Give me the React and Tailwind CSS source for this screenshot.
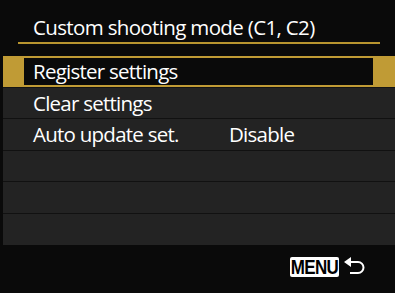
import React from 'react';

const rows = [
  { label: 'Register settings', selected: true },
  { label: 'Clear settings' },
  { label: 'Auto update set.', value: 'Disable' },
  { label: '' },
  { label: '' },
  { label: '' },
];

const BackArrow = () => (
  <svg width="22" height="20" viewBox="0 0 22 20" className="block">
    <path d="M0 5 L7 0 L7 10 Z" fill="#fff" />
    <path d="M6 5 H14 A5.5 5.5 0 0 1 14 16 H6" fill="none" stroke="#fff" strokeWidth="2" />
  </svg>
);

export default function App() {
  return (
    <div
      className="w-[395px] h-[293px] bg-[#0a0a0a] text-white flex flex-col overflow-hidden"
      style={{ fontFamily: '"Open Sans", "Noto Sans", sans-serif' }}
    >
      <div className="h-[56px] flex flex-col pl-[18px] pr-[15px]">
        <div className="pt-[14px] pl-[15px] text-[20.5px] leading-[26px] tracking-[-0.65px]">
          Custom shooting mode (C1, C2)
        </div>
        <div className="mt-[2px] h-[1.5px] bg-[#b8952f]" />
      </div>

      <div className="flex flex-col pl-[3px]">
        {rows.map((r, i) =>
          r.selected ? (
            <div key={i} className="h-[31.5px] bg-[#c09b35] pl-[21px] pr-[22px] py-[2px] border-b-[1.5px] border-[#141414]">
              <div className="h-full bg-[#0a0a0a] pl-[9px] flex items-center text-[20.5px] leading-none tracking-[-0.75px]">
                {r.label}
              </div>
            </div>
          ) : (
            <div
              key={i}
              className={`h-[31.5px] bg-[#232323] pl-[30px] flex items-center text-[20.5px] leading-none tracking-[-0.75px] ${i < rows.length - 1 ? 'border-b-[1.5px] border-[#111]' : ''}`}
            >
              <span className="w-[196px]">{r.label}</span>
              {r.value && <span>{r.value}</span>}
            </div>
          )
        )}
      </div>

      <div className="flex-1 flex items-start justify-end pt-[12px] pr-[29px] gap-[5px]">
        <div className="h-[20px] w-[49px] bg-white rounded-[2px] flex items-center justify-center">
          <span
            className="text-black text-[17px] font-bold leading-none tracking-[-0.7px] scale-y-[1.15]"
            style={{ fontFamily: '"Liberation Sans", sans-serif' }}
          >
            MENU
          </span>
        </div>
        <BackArrow />
      </div>
    </div>
  );
}
